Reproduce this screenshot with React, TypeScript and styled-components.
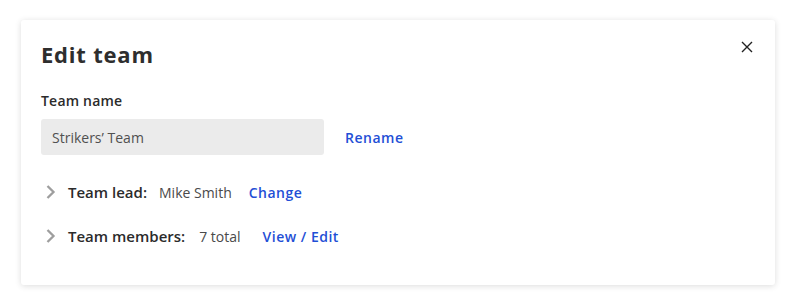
import React from 'react';
import styled, { createGlobalStyle } from 'styled-components';

const GlobalStyle = createGlobalStyle`
  html, body {
    margin: 0;
    padding: 0;
    background: #ffffff;
  }
  body {
    font-family: 'Open Sans', 'Noto Sans', Arial, sans-serif;
    color: #2b2b2b;
  }
`;

const Page = styled.div`
  padding: 20px 25px 22px 21px;
`;

const Card = styled.div`
  background: #ffffff;
  border-radius: 3px;
  box-shadow: 0 1px 6px rgba(0, 0, 0, 0.14);
  height: 265px;
  box-sizing: border-box;
  padding: 20px 20px 0 20px;
  display: flex;
  flex-direction: column;
`;

const Header = styled.div`
  display: flex;
  justify-content: space-between;
  align-items: flex-start;
`;

const Title = styled.h1`
  margin: 0;
  font-size: 22px;
  line-height: 28px;
  font-weight: 700;
  letter-spacing: 0.8px;
  color: #2e2e2e;
`;

const CloseButton = styled.button`
  border: none;
  background: none;
  padding: 0;
  margin: 0 1px 0 0;
  width: 14px;
  height: 14px;
  cursor: pointer;
  display: flex;
  align-items: center;
  justify-content: center;
`;

const Label = styled.div`
  margin-top: 24px;
  font-size: 14px;
  font-weight: 600;
  line-height: 18px;
  letter-spacing: 0.2px;
`;

const NameRow = styled.div`
  margin-top: 9px;
  display: flex;
  align-items: center;
  gap: 21px;
`;

const NameInput = styled.div`
  width: 283px;
  height: 36px;
  box-sizing: border-box;
  background: #ebebeb;
  border-radius: 3px;
  padding: 0 11px;
  display: flex;
  align-items: center;
  font-size: 14px;
  color: #505050;
`;

const LinkButton = styled.button<{ $gap?: number }>`
  border: none;
  background: none;
  padding: 0;
  margin-left: ${({ $gap }) => $gap ?? 0}px;
  font-family: inherit;
  font-size: 14px;
  font-weight: 600;
  letter-spacing: 0.5px;
  color: #1f4fd6;
  cursor: pointer;
`;

const Rows = styled.div`
  margin-top: 28px;
  display: flex;
  flex-direction: column;
  gap: 26px;
`;

const DetailRow = styled.div`
  display: flex;
  align-items: center;
  height: 18px;
`;

const Chevron = styled.span`
  width: 27px;
  padding-left: 4px;
  box-sizing: border-box;
  display: flex;
  align-items: center;
`;

const RowLabel = styled.span`
  font-size: 15px;
  font-weight: 600;
  color: #2b2b2b;
`;

const RowValue = styled.span<{ $gap: number }>`
  margin-left: ${({ $gap }) => $gap}px;
  font-size: 14px;
  color: #4a4a4a;
`;

const ChevronIcon = () => (
  <svg width="11" height="14" viewBox="0 0 11 14">
    <path d="M2.5 1 L8.5 7 L2.5 13" fill="none" stroke="#9e9e9e" strokeWidth="2.3" />
  </svg>
);

const CloseIcon = () => (
  <svg width="12" height="12" viewBox="0 0 12 12">
    <path d="M1 1 L11 11 M11 1 L1 11" stroke="#222" strokeWidth="1.4" />
  </svg>
);

export default function App() {
  return (
    <>
      <GlobalStyle />
      <Page>
        <Card>
          <Header>
            <Title>Edit team</Title>
            <CloseButton aria-label="Close">
              <CloseIcon />
            </CloseButton>
          </Header>
          <Label>Team name</Label>
          <NameRow>
            <NameInput>Strikers’ Team</NameInput>
            <LinkButton>Rename</LinkButton>
          </NameRow>
          <Rows>
            <DetailRow>
              <Chevron><ChevronIcon /></Chevron>
              <RowLabel>Team lead:</RowLabel>
              <RowValue $gap={12}>Mike Smith</RowValue>
              <LinkButton $gap={17}>Change</LinkButton>
            </DetailRow>
            <DetailRow>
              <Chevron><ChevronIcon /></Chevron>
              <RowLabel>Team members:</RowLabel>
              <RowValue $gap={14}>7 total</RowValue>
              <LinkButton $gap={22}>View / Edit</LinkButton>
            </DetailRow>
          </Rows>
        </Card>
      </Page>
    </>
  );
}
